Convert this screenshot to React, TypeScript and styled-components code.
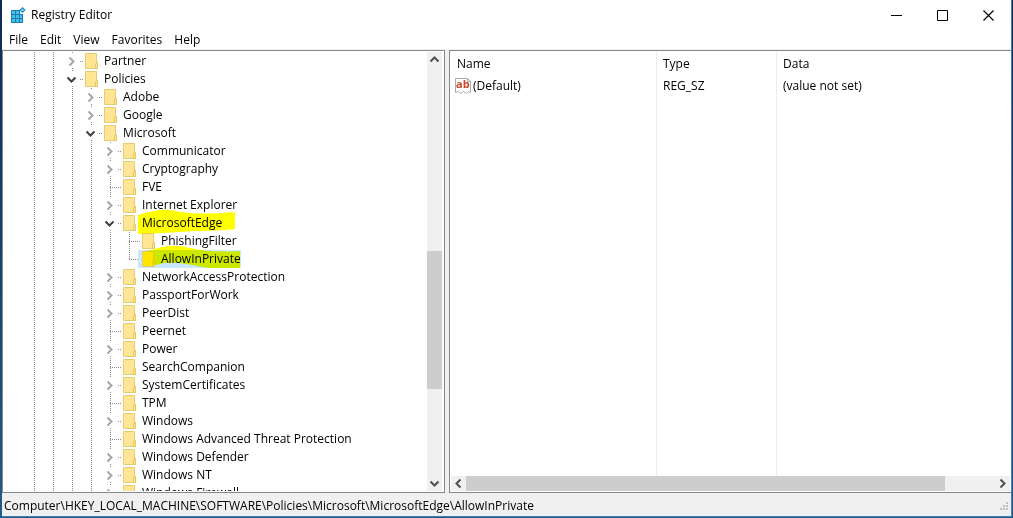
import React from 'react';
import styled, { createGlobalStyle, css } from 'styled-components';

const Global = createGlobalStyle`
  * { box-sizing: border-box; }
  body { margin: 0; background: #17406b; }
  button, table { font: inherit; color: inherit; }
`;

const Desktop = styled.div`
  height: 100vh;
  padding: 0 1px 1px 2px;
  background: linear-gradient(#0d2b52, #1f5c8c);
  font-family: "Segoe UI", "Open Sans", sans-serif;
  font-size: 12px;
  line-height: 18px;
  color: #000;
`;

const Window = styled.div`
  display: flex;
  flex-direction: column;
  height: 100%;
  background: #f0f0f0;
  border-right: 1px solid #4a7ebb;
  border-bottom: 1px solid #3f7fae;
`;

const TitleBar = styled.header`
  display: flex;
  align-items: center;
  height: 30px;
  padding-left: 7px;
  background: #fff;
`;

const Title = styled.h1`
  flex: 1;
  margin: 0 0 0 5px;
  font-size: 12px;
  font-weight: 400;
`;

const CaptionButton = styled.button`
  display: flex;
  align-items: center;
  justify-content: center;
  width: 46px;
  height: 28px;
  padding: 0;
  border: 0;
  background: none;
`;

const MenuBar = styled.nav`
  display: flex;
  height: 19px;
  padding-left: 1px;
  background: #fff;
`;

const MenuItem = styled.button`
  padding: 0 6px;
  border: 0;
  background: none;
  line-height: 19px;
`;

const Panes = styled.main`
  display: flex;
  flex: 1;
  min-height: 0;
  gap: 4px;
  padding-top: 1px;
`;

const Pane = styled.section<{ $wide?: boolean }>`
  display: flex;
  flex-direction: ${p => (p.$wide ? 'column' : 'row')};
  flex: ${p => (p.$wide ? '1' : '0 0 443px')};
  min-width: 0;
  padding: ${p => (p.$wide ? '1px 1px' : '1px 2px 1px 0')};
  border: 1px solid #828790;
  border-width: ${p => (p.$wide ? '1px 0 1px 1px' : '1px')};
  background: #fff;
`;

const Tree = styled.ul`
  flex: 1;
  margin: 0;
  padding: 0 0 0 22px;
  overflow: hidden;
  list-style: none;
`;

const Row = styled.li`
  display: flex;
  height: 18px;
`;

const dots = '#8a8a8a 0 1px, transparent 1px 2px';

const Guide = styled.span`
  flex: none;
  width: 19px;
  background: repeating-linear-gradient(${dots}) 9px 0 / 1px 100% no-repeat;
`;

const Branch = styled.span<{ $last?: boolean }>`
  display: flex;
  flex: none;
  align-items: center;
  width: 22px;
  padding-left: 2px;
  background:
    repeating-linear-gradient(${dots}) 9px 0 / 1px ${p => (p.$last ? '9px' : '100%')} no-repeat,
    repeating-linear-gradient(90deg, ${dots}) 9px 9px / 12px 1px no-repeat;
`;

const Toggle = styled.button`
  display: flex;
  align-items: center;
  justify-content: center;
  width: 14px;
  height: 14px;
  padding: 0 1px 0 0;
  border: 0;
  background: #fff;
`;

const Label = styled.span<{ $selected?: boolean }>`
  position: relative;
  display: flex;
  ${p =>
    p.$selected &&
    css`
      background: #cce8ff;
      box-shadow: -4px 0 #cce8ff;
    `}
`;

const Name = styled.span`
  padding-left: 5px;
  white-space: nowrap;
`;

const Marker = styled.svg<{ $overIcon: boolean }>`
  position: absolute;
  left: ${p => (p.$overIcon ? '-4px' : '15px')};
  top: -6px;
  z-index: 1;
  mix-blend-mode: multiply;
  pointer-events: none;
`;

const ScrollBar = styled.div<{ $horizontal?: boolean }>`
  display: flex;
  flex: none;
  flex-direction: ${p => (p.$horizontal ? 'row' : 'column')};
  background: #f0f0f0;
  ${p => (p.$horizontal ? 'height: 15px;' : 'width: 15px;')}
`;

const ScrollButton = styled.button`
  display: flex;
  flex: none;
  align-items: center;
  justify-content: center;
  width: 15px;
  height: 15px;
  padding: 0;
  border: 0;
  background: none;
`;

const Space = styled.div<{ $grow: number }>`
  flex: ${p => p.$grow} 0 0;
`;

const Thumb = styled(Space)`
  background: #cdcdcd;
`;

const ListArea = styled.div`
  display: flex;
  flex: 1;
  min-height: 0;
`;

const Values = styled.table`
  width: 100%;
  height: 100%;
  table-layout: fixed;
  border-collapse: separate;
  border-spacing: 0;
  text-align: left;

  th, td {
    padding: 0 6px;
    border-right: 1px solid #e5eef7;
    font-weight: 400;
    white-space: nowrap;
  }
  th { height: 24px; }
  td { height: 20px; }
  tr:last-child td { height: auto; }
  tbody tr:first-child td { height: 20px; }
  th:last-child, td:last-child { border-right: 0; }
  th:first-child { width: 206px; }
  th:nth-child(2) { width: 120px; }
`;

const ValueName = styled.div`
  display: flex;
  align-items: center;
  gap: 2px;
  margin-left: -2px;
`;

const StatusBar = styled.footer`
  display: flex;
  align-items: center;
  justify-content: space-between;
  height: 23px;
  padding: 3px 2px 0;
`;

type Node = { name: string; level: number; state?: 'open' | 'closed'; last?: boolean; mark?: 'edge' | 'private' };

const nodes: Node[] = [
  { name: 'Partner', level: 0, state: 'closed' },
  { name: 'Policies', level: 0, state: 'open' },
  { name: 'Adobe', level: 1, state: 'closed' },
  { name: 'Google', level: 1, state: 'closed' },
  { name: 'Microsoft', level: 1, state: 'open' },
  { name: 'Communicator', level: 2, state: 'closed' },
  { name: 'Cryptography', level: 2, state: 'closed' },
  { name: 'FVE', level: 2 },
  { name: 'Internet Explorer', level: 2, state: 'closed' },
  { name: 'MicrosoftEdge', level: 2, state: 'open', mark: 'edge' },
  { name: 'PhishingFilter', level: 3 },
  { name: 'AllowInPrivate', level: 3, last: true, mark: 'private' },
  { name: 'NetworkAccessProtection', level: 2, state: 'closed' },
  { name: 'PassportForWork', level: 2, state: 'closed' },
  { name: 'PeerDist', level: 2, state: 'closed' },
  { name: 'Peernet', level: 2 },
  { name: 'Power', level: 2, state: 'closed' },
  { name: 'SearchCompanion', level: 2 },
  { name: 'SystemCertificates', level: 2, state: 'closed' },
  { name: 'TPM', level: 2 },
  { name: 'Windows', level: 2, state: 'closed' },
  { name: 'Windows Advanced Threat Protection', level: 2 },
  { name: 'Windows Defender', level: 2, state: 'closed' },
  { name: 'Windows NT', level: 2, state: 'closed' },
  { name: 'Windows Firewall', level: 2, state: 'closed' },
];

const markerPaths = {
  edge: 'M0 7 Q8 4 16 3 Q28 0 42 4 Q66 7 95 4 Q97 4 97 6 V21 Q80 23 56 23 Q30 25 0 26Z',
  private: 'M5 8 Q14 6 24 3 Q38 0 52 4 Q74 9 102 7 V24 H72 Q62 23 54 21 Q34 17 22 20 Q12 23 5 22Z',
};

const chevrons = {
  right: 'M-2 -4 L2 0 L-2 4',
  left: 'M2 -4 L-2 0 L2 4',
  up: 'M-4 2 L0 -2 L4 2',
  down: 'M-4 -2 L0 2 L4 -2',
};

function Chevron({ dir, color = '#505050' }: { dir: keyof typeof chevrons; color?: string }) {
  return (
    <svg width="13" height="13" viewBox="-6.5 -6.5 13 13" aria-hidden="true">
      <path d={chevrons[dir]} fill="none" stroke={color} strokeWidth="2" />
    </svg>
  );
}

function Folder() {
  return (
    <svg width="14" height="18" viewBox="0 0 14 18" aria-hidden="true">
      <path d="M.5 1.5h11v9h1v6H.5z" fill="#ffe694" stroke="#e8cb70" />
      <path d="M10.5 16.500v-5l2-1v6z" fill="#ffe68a" stroke="#e8c860" />
    </svg>
  );
}

function RegistryIcon() {
  return (
    <svg width="17" height="17" viewBox="0 0 17 17" aria-hidden="true">
      <path d="M2 3h9v4h3v9H2z" fill="#1580b4" />
      <path d="M3 4h3v3H3zM7 4h3v3H7zM3 8h3v3H3zM7 8h3v3H7zM11 8h2v3h-2zM3 12h3v3H3zM7 12h3v3H7zM11 12h2v3h-2z" fill="#45bfe8" />
      <path d="M13.500 0l3 3-3 3-3-3z" fill="#1580b4" />
      <path d="M13.500 1.500l1.500 1.500-1.500 1.500-1.500-1.500z" fill="#8fe0f7" />
    </svg>
  );
}

function StringIcon() {
  return (
    <svg width="16" height="16" viewBox="0 0 16 16" aria-hidden="true">
      <path d="M.5.5h12l3 3v11l-2-1-2 2-3-2-3 2-2-2-3 1z" fill="#fff" stroke="#a5adb5" />
      <path d="M12.500.5v3h3" fill="none" stroke="#a5adb5" />
      <text x="1" y="10" fontFamily="Open Sans" fontSize="11" fontWeight="700" fill="#c8452b">ab</text>
    </svg>
  );
}

function TreeRow({ node }: { node: Node }) {
  return (
    <Row>
      {Array.from({ length: node.level + 2 }, (_, i) => <Guide key={i} />)}
      <Branch $last={node.last}>
        {node.state && (
          <Toggle aria-label={`${node.state === 'open' ? 'Collapse' : 'Expand'} ${node.name}`}>
            <Chevron dir={node.state === 'open' ? 'down' : 'right'} color={node.state === 'open' ? '#404040' : '#a6a6a6'} />
          </Toggle>
        )}
      </Branch>
      <Label $selected={node.mark === 'private'}>
        <Folder />
        <Name>{node.name}</Name>
        {node.mark && (
          <Marker $overIcon={node.mark === 'private'} width="106" height="28" viewBox="0 0 106 28" aria-hidden="true">
            <path d={markerPaths[node.mark]} fill="#ff0" />
          </Marker>
        )}
      </Label>
    </Row>
  );
}

export default function App() {
  return (
    <>
      <Global />
      <Desktop>
        <Window>
          <TitleBar>
            <RegistryIcon />
            <Title>Registry Editor</Title>
            <CaptionButton aria-label="Minimize">
              <svg width="11" height="11"><path d="M0 5.500h11" stroke="#000" /></svg>
            </CaptionButton>
            <CaptionButton aria-label="Maximize">
              <svg width="11" height="11"><path d="M.5.5h10v10H.5z" fill="none" stroke="#000" /></svg>
            </CaptionButton>
            <CaptionButton aria-label="Close">
              <svg width="11" height="11"><path d="M.5.5l10 10M10.500.5l-10 10" stroke="#000" strokeWidth="1.200" /></svg>
            </CaptionButton>
          </TitleBar>
          <MenuBar>
            {['File', 'Edit', 'View', 'Favorites', 'Help'].map(m => <MenuItem key={m}>{m}</MenuItem>)}
          </MenuBar>
          <Panes>
            <Pane>
              <Tree>{nodes.map(n => <TreeRow key={n.name} node={n} />)}</Tree>
              <ScrollBar>
                <ScrollButton aria-label="Scroll up"><Chevron dir="up" /></ScrollButton>
                <Space $grow={183} />
                <Thumb $grow={137} />
                <Space $grow={87} />
                <ScrollButton aria-label="Scroll down"><Chevron dir="down" /></ScrollButton>
              </ScrollBar>
            </Pane>
            <Pane $wide>
              <ListArea>
                <Values>
                  <thead>
                    <tr><th>Name</th><th>Type</th><th>Data</th></tr>
                  </thead>
                  <tbody>
                    <tr>
                      <td><ValueName><StringIcon />(Default)</ValueName></td>
                      <td>REG_SZ</td>
                      <td>(value not set)</td>
                    </tr>
                    <tr><td /><td /><td /></tr>
                  </tbody>
                </Values>
              </ListArea>
              <ScrollBar $horizontal>
                <ScrollButton aria-label="Scroll left"><Chevron dir="left" /></ScrollButton>
                <Thumb $grow={476} />
                <Space $grow={50} />
                <ScrollButton aria-label="Scroll right"><Chevron dir="right" /></ScrollButton>
              </ScrollBar>
            </Pane>
          </Panes>
          <StatusBar>
            <span>Computer\HKEY_LOCAL_MACHINE\SOFTWARE\Policies\Microsoft\MicrosoftEdge\AllowInPrivate</span>
            <svg width="10" height="14" viewBox="0 0 10 14" aria-hidden="true">
              <path d="M7 3h2v2H7zM4 6h2v2H4zM7 6h2v2H7zM1 9h2v2H1zM4 9h2v2H4zM7 9h2v2H7z" fill="#bfbfbf" />
            </svg>
          </StatusBar>
        </Window>
      </Desktop>
    </>
  );
}
